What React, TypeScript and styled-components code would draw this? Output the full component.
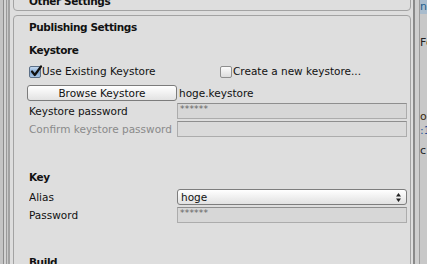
import React from 'react'
import styled, { createGlobalStyle } from 'styled-components'

const GlobalStyle = createGlobalStyle`
  html, body {
    margin: 0;
    padding: 0;
    background: #dedede;
  }
  body {
    font-family: 'DejaVu Sans', 'Noto Sans', sans-serif;
    font-size: 10.5px;
    color: #111;
  }
`

const Screen = styled.div`
  display: flex;
  width: 427px;
  height: 264px;
  overflow: hidden;
  background: #dedede;
`

// stripes on the far left (window edge / splitter)
const Rail = styled.div`
  flex: 0 0 13px;
  background: linear-gradient(
    to right,
    #c4c4c4 0 3px,
    #8c8c8c 3px 4px,
    #d2d2d2 4px 6px,
    #9a9a9a 6px 7px,
    #cacaca 7px 8px,
    #a2a2a2 8px 10px,
    #dedede 10px 13px
  );
`

const Inspector = styled.div`
  flex: 0 0 399px;
  display: flex;
  flex-direction: column;
  gap: 4px;
  margin-top: -11px;
  padding-right: 1px;
  box-sizing: border-box;
`

const Box = styled.div`
  border: 1px solid #a3a3a3;
  border-radius: 4px;
  padding: 4px 3px 2px 15px;
`

const Title = styled.div<{ $gap?: number }>`
  font-weight: bold;
  letter-spacing: -0.4px;
  line-height: 14px;
  margin-top: ${p => p.$gap ?? 0}px;
`

const CheckRow = styled.div`
  display: grid;
  grid-template-columns: 191px 1fr;
  height: 14px;
  margin-top: 7px;
`

const CheckItem = styled.label`
  display: flex;
  align-items: center;
  gap: 1px;
  line-height: 14px;
  white-space: nowrap;
`

const CheckBox = styled.span<{ $on?: boolean }>`
  position: relative;
  width: 10px;
  height: 10px;
  margin-top: 1px;
  border: 1px solid ${p => (p.$on ? '#5b6f87' : '#8e8e8e')};
  border-radius: 2px;
  background: ${p =>
    p.$on
      ? 'linear-gradient(#c5d9ef, #7fa6d3 55%, #a9c6e6)'
      : 'linear-gradient(#fbfbfb, #dcdcdc)'};
  svg {
    position: absolute;
    left: 0px;
    top: -2px;
  }
`

const Rows = styled.div<{ $gap?: number }>`
  display: flex;
  flex-direction: column;
  gap: 2px;
  margin-top: ${p => p.$gap ?? 0}px;
`

const Row = styled.div`
  display: grid;
  grid-template-columns: 148px 230px;
  height: 16px;
  align-items: center;
`

const Label = styled.span<{ $dim?: boolean }>`
  color: ${p => (p.$dim ? '#8a8a8a' : '#111')};
  white-space: nowrap;
  overflow: hidden;
  line-height: 16px;
`

const Button = styled.button`
  margin-left: -2px;
  width: 150px;
  height: 16px;
  padding: 0;
  font: inherit;
  color: #111;
  border: 1px solid #7c7c7c;
  border-radius: 3px;
  background: linear-gradient(#ffffff, #f1f1f1 50%, #e2e2e2);
  line-height: 13px;
`

const FileName = styled.span`
  padding-left: 2px;
  line-height: 16px;
`

const Field = styled.div<{ $disabled?: boolean }>`
  height: 16px;
  box-sizing: border-box;
  border: 1px solid #acacac;
  border-top-color: #8e8e8e;
  background: ${p => (p.$disabled ? '#dadada' : '#d7d7d7')};
  color: #666;
  font-size: 9px;
  line-height: 10px;
  padding-left: 2px;
  letter-spacing: 0.2px;
`

const Popup = styled.div`
  display: flex;
  align-items: center;
  justify-content: space-between;
  height: 16px;
  box-sizing: border-box;
  padding: 0 5px 0 3px;
  border: 1px solid #7d7d7d;
  border-radius: 3px;
  background: linear-gradient(#ffffff, #f0f0f0 50%, #e1e1e1);
  line-height: 14px;
`

const Splitter = styled.div`
  flex: 0 0 8px;
  background: linear-gradient(
    to right,
    #dedede 0 1px,
    #8a8a8a 1px 3px,
    #cfcfcf 3px 7px,
    #9c9c9c 7px 8px
  );
`

const Code = styled.div`
  flex: 1;
  background: #c8c8c8;
  overflow: hidden;
  font-size: 11px;
  line-height: 14px;
  white-space: nowrap;
`

const CodeLine = styled.div<{ $color?: string; $top?: number; $bg?: string }>`
  color: ${p => p.$color ?? '#222'};
  background: ${p => p.$bg ?? 'transparent'};
  margin-top: ${p => p.$top ?? 0}px;
`

const Check = () => (
  <svg width="13" height="12" viewBox="0 0 13 12">
    <path d="M2 6.5 L4.8 10 L11 1.5" fill="none" stroke="#111" strokeWidth="2.2" strokeLinecap="round" strokeLinejoin="round" />
  </svg>
)

const Arrows = () => (
  <svg width="5" height="9" viewBox="0 0 5 9">
    <path d="M2.5 0 L5 3.5 H0 Z M2.5 9 L5 5.5 H0 Z" fill="#222" />
  </svg>
)

const App: React.FC = () => {
  return (
    <>
      <GlobalStyle />
      <Screen>
        <Rail />
        <Inspector>
          <Box>
            <Title>Other Settings</Title>
          </Box>
          <Box>
            <Title>Publishing Settings</Title>
            <Title $gap={9}>Keystore</Title>
            <CheckRow>
              <CheckItem>
                <CheckBox $on>
                  <Check />
                </CheckBox>
                Use Existing Keystore
              </CheckItem>
              <CheckItem>
                <CheckBox />
                Create a new keystore...
              </CheckItem>
            </CheckRow>
            <Rows $gap={7}>
              <Row>
                <Button type="button">Browse Keystore</Button>
                <FileName>hoge.keystore</FileName>
              </Row>
              <Row>
                <Label>Keystore password</Label>
                <Field>******</Field>
              </Row>
              <Row>
                <Label $dim>Confirm keystore password</Label>
                <Field $disabled />
              </Row>
            </Rows>
            <Title $gap={33}>Key</Title>
            <Rows $gap={5}>
              <Row>
                <Label>Alias</Label>
                <Popup>
                  <span>hoge</span>
                  <Arrows />
                </Popup>
              </Row>
              <Row>
                <Label>Password</Label>
                <Field>******</Field>
              </Row>
            </Rows>
            <Title $gap={32}>Build</Title>
          </Box>
        </Inspector>
        <Splitter />
        <Code>
          <CodeLine $bg="#a9bccd" $color="#1d5f8c">n</CodeLine>
          <CodeLine $top={22}>Fo</CodeLine>
          <CodeLine $top={60} $color="#3a2a10">od</CodeLine>
          <CodeLine $color="#1f4f9a">:1</CodeLine>
          <CodeLine $top={6}>c</CodeLine>
        </Code>
      </Screen>
    </>
  )
}

export default App
